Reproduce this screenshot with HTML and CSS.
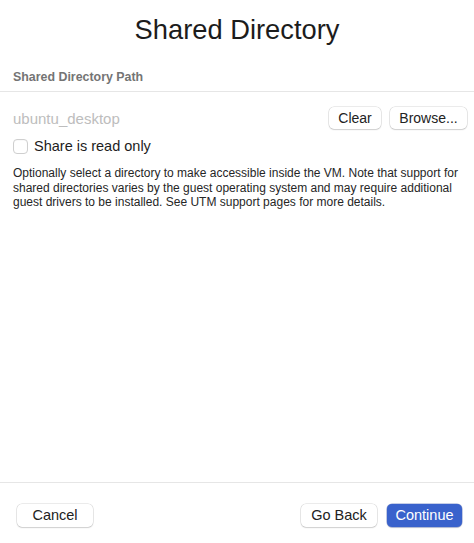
FILE: index.html
```html
<!DOCTYPE html>
<html>
<head>
<meta charset="utf-8">
<link rel="stylesheet" href="styles.css">
</head>
<body>
<div class="dialog">
  <h1 class="title">Shared Directory</h1>
  <div class="section-label">Shared Directory Path</div>
  <div class="path-row">
    <span class="path">ubuntu_desktop</span>
    <div class="path-actions">
      <button class="btn btn-clear">Clear</button>
      <button class="btn btn-browse">Browse...</button>
    </div>
  </div>
  <label class="check-row">
    <span class="checkbox"></span>
    <span class="check-label">Share is read only</span>
  </label>
  <p class="note">Optionally select a directory to make accessible inside the VM. Note that support for shared directories varies by the guest operating system and may require additional guest drivers to be installed. See UTM support pages for more details.</p>
  <div class="spacer"></div>
  <div class="footer">
    <button class="btn btn-footer">Cancel</button>
    <div class="footer-right">
      <button class="btn btn-footer">Go Back</button>
      <button class="btn btn-footer btn-primary">Continue</button>
    </div>
  </div>
</div>
</body>
</html>
```

FILE: styles.css
```css
html, body {
  margin: 0;
  padding: 0;
  background: #ffffff;
}

body {
  font-family: "Liberation Sans", Arial, sans-serif;
  color: #1d1d1d;
}

.dialog {
  display: flex;
  flex-direction: column;
  height: 543px;
  width: 474px;
  overflow: hidden;
}

.title {
  margin: 0;
  padding-top: 14px;
  font-size: 27.3px;
  font-weight: 400;
  line-height: 31px;
  text-align: center;
  color: #1c1c1c;
}

.section-label {
  margin-top: 25px;
  padding: 0 13px 7px 13px;
  font-size: 12.4px;
  line-height: 14px;
  font-weight: 700;
  color: #747474;
  border-bottom: 1px solid #e6e6e6;
}

.path-row {
  display: flex;
  align-items: center;
  justify-content: space-between;
  margin-top: 15px;
  padding: 0 7px 0 13px;
  height: 22px;
}

.path {
  font-size: 15px;
  line-height: 17px;
  color: #bdbdbd;
}

.path-actions {
  display: flex;
  gap: 9px;
}

.btn {
  font-family: "Liberation Sans", Arial, sans-serif;
  font-size: 14px;
  color: #222222;
  background: #ffffff;
  border: none;
  border-radius: 5px;
  box-shadow: 0 0 0 0.5px rgba(0, 0, 0, 0.16), 0 1px 1.5px rgba(0, 0, 0, 0.12);
  padding: 0;
  margin: 0;
  height: 22px;
  line-height: 22px;
  text-align: center;
}

.btn-clear {
  width: 52px;
}

.btn-browse {
  width: 77px;
}

.check-row {
  display: flex;
  align-items: center;
  margin-top: 10px;
  padding-left: 13px;
  height: 15px;
}

.checkbox {
  box-sizing: border-box;
  width: 15px;
  height: 15px;
  border: 1px solid #cfcfcf;
  border-radius: 4px;
  background: #ffffff;
  box-shadow: inset 0 0.5px 1px rgba(0, 0, 0, 0.05);
  margin-right: 6px;
}

.check-label {
  font-size: 14.5px;
  line-height: 17px;
  color: #1d1d1d;
}

.note {
  margin: 12px 0 0 0;
  padding: 0 8px 0 13px;
  font-size: 12px;
  line-height: 14.5px;
  color: #262626;
}

.spacer {
  flex: 1;
}

.footer {
  display: flex;
  align-items: center;
  justify-content: space-between;
  border-top: 1px solid #e6e6e6;
  padding: 21px 12px 16px 17px;
}

.footer-right {
  display: flex;
  gap: 10px;
}

.btn-footer {
  width: 76px;
  height: 23px;
  line-height: 23px;
  font-size: 14.5px;
}

.btn-primary {
  width: 75px;
  background: #3962cc;
  color: #ffffff;
  box-shadow: 0 0 0 0.5px rgba(30, 60, 160, 0.5), 0 1px 1.5px rgba(0, 0, 0, 0.12);
}
```
